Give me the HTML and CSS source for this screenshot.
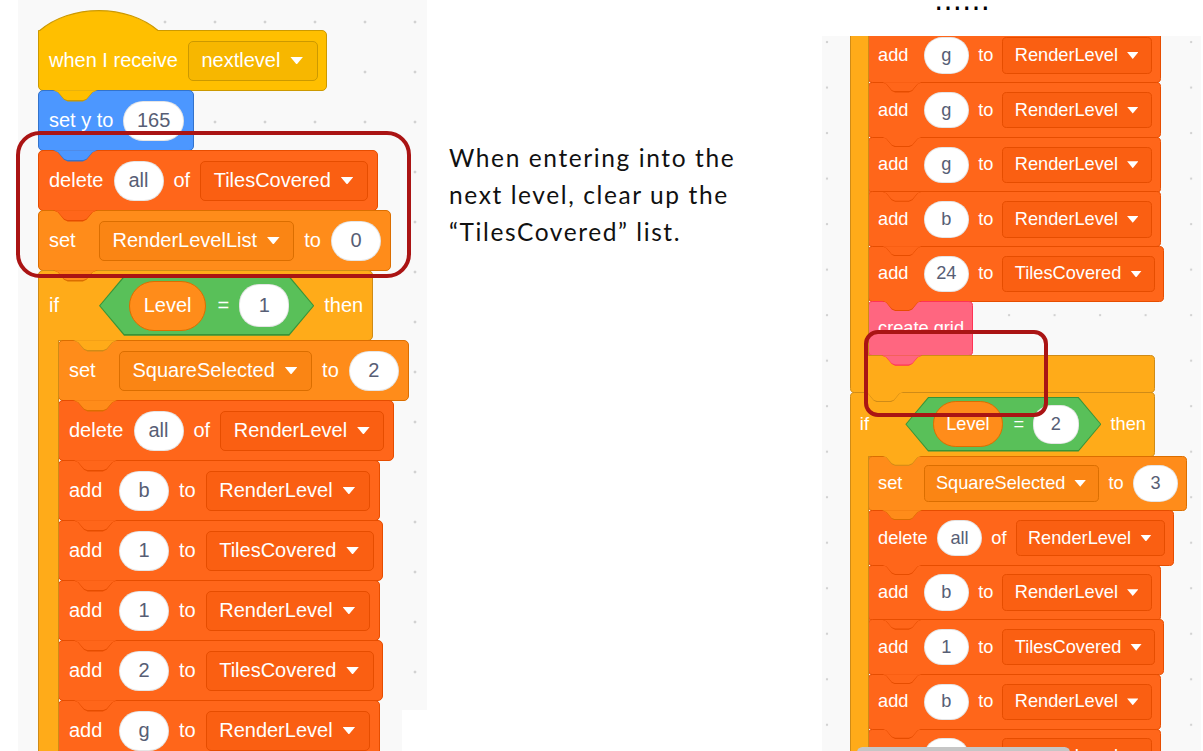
FILE: index.html
```html
<!DOCTYPE html>
<html lang="en">
<head>
    <meta charset="UTF-8">
    <title>Next level</title>
    <link rel="stylesheet" href="styles.css">
</head>
<body>
    <div class="slide">
        <!-- left screenshot: start of the nextlevel script -->
        <div class="shot shot-left">
            <div class="stack">
                <div class="block hat events">
                    <svg class="hat-cap" width="100" height="21" viewBox="0 0 100 21"><path d="M1.5 21 C26.5 -1 72.5 -1 97.5 21" fill="#FFBF00" stroke="#CC9900"/></svg>
                    <span class="label">when I receive</span>
                    <span class="dropdown">nextlevel<i class="arrow"></i></span>
                </div>
                <div class="block motion">
                    <span class="label">set y to</span>
                    <span class="oval">165</span>
                </div>
                <div class="block list">
                    <span class="label">delete</span>
                    <span class="oval">all</span>
                    <span class="label">of</span>
                    <span class="dropdown">TilesCovered<i class="arrow"></i></span>
                </div>
                <div class="block data">
                    <span class="label">set</span>
                    <span class="dropdown">RenderLevelList<i class="arrow"></i></span>
                    <span class="label">to</span>
                    <span class="oval">0</span>
                </div>
                <div class="c-block control">
                    <div class="block c-top">
                        <span class="label">if</span>
                        <span class="hex"><span class="pill">Level</span><span class="label">=</span><span class="oval">1</span></span>
                        <span class="label">then</span>
                    </div>
                    <div class="c-body">
                        <div class="c-arm"></div>
                        <div class="stack">
                            <div class="block data">
                                <span class="label">set</span>
                                <span class="dropdown">SquareSelected<i class="arrow"></i></span>
                                <span class="label">to</span>
                                <span class="oval">2</span>
                            </div>
                            <div class="block list">
                                <span class="label">delete</span>
                                <span class="oval">all</span>
                                <span class="label">of</span>
                                <span class="dropdown">RenderLevel<i class="arrow"></i></span>
                            </div>
                            <div class="block list">
                                <span class="label">add</span><span class="oval">b</span><span class="label">to</span>
                                <span class="dropdown">RenderLevel<i class="arrow"></i></span>
                            </div>
                            <div class="block list">
                                <span class="label">add</span><span class="oval">1</span><span class="label">to</span>
                                <span class="dropdown">TilesCovered<i class="arrow"></i></span>
                            </div>
                            <div class="block list">
                                <span class="label">add</span><span class="oval">1</span><span class="label">to</span>
                                <span class="dropdown">RenderLevel<i class="arrow"></i></span>
                            </div>
                            <div class="block list">
                                <span class="label">add</span><span class="oval">2</span><span class="label">to</span>
                                <span class="dropdown">TilesCovered<i class="arrow"></i></span>
                            </div>
                            <div class="block list">
                                <span class="label">add</span><span class="oval">g</span><span class="label">to</span>
                                <span class="dropdown">RenderLevel<i class="arrow"></i></span>
                            </div>
                        </div>
                    </div>
                </div>
            </div>
        </div>

        <div class="note">
            <p>When entering into the<br>next level, clear up the<br>“TilesCovered” list.</p>
        </div>

        <!-- right screenshot: end of level 1, start of level 2 -->
        <div class="right-col">
            <div class="dots">……</div>
            <div class="shot shot-right">
                <div class="stack">
                    <div class="c-block control">
                        <div class="c-body">
                            <div class="c-arm"></div>
                            <div class="stack">
                                <div class="block list">
                                    <span class="label">add</span><span class="oval">g</span><span class="label">to</span>
                                    <span class="dropdown">RenderLevel<i class="arrow"></i></span>
                                </div>
                                <div class="block list">
                                    <span class="label">add</span><span class="oval">g</span><span class="label">to</span>
                                    <span class="dropdown">RenderLevel<i class="arrow"></i></span>
                                </div>
                                <div class="block list">
                                    <span class="label">add</span><span class="oval">g</span><span class="label">to</span>
                                    <span class="dropdown">RenderLevel<i class="arrow"></i></span>
                                </div>
                                <div class="block list">
                                    <span class="label">add</span><span class="oval">b</span><span class="label">to</span>
                                    <span class="dropdown">RenderLevel<i class="arrow"></i></span>
                                </div>
                                <div class="block list">
                                    <span class="label">add</span><span class="oval">24</span><span class="label">to</span>
                                    <span class="dropdown">TilesCovered<i class="arrow"></i></span>
                                </div>
                                <div class="block custom">
                                    <span class="label clipped">create grid</span>
                                </div>
                            </div>
                        </div>
                        <div class="block c-bottom"></div>
                    </div>
                    <div class="c-block control">
                        <div class="block c-top">
                            <span class="label">if</span>
                            <span class="hex"><span class="pill">Level</span><span class="label">=</span><span class="oval">2</span></span>
                            <span class="label">then</span>
                        </div>
                        <div class="c-body">
                            <div class="c-arm"></div>
                            <div class="stack">
                                <div class="block data">
                                    <span class="label">set</span>
                                    <span class="dropdown">SquareSelected<i class="arrow"></i></span>
                                    <span class="label">to</span>
                                    <span class="oval">3</span>
                                </div>
                                <div class="block list">
                                    <span class="label">delete</span>
                                    <span class="oval">all</span>
                                    <span class="label">of</span>
                                    <span class="dropdown">RenderLevel<i class="arrow"></i></span>
                                </div>
                                <div class="block list">
                                    <span class="label">add</span><span class="oval">b</span><span class="label">to</span>
                                    <span class="dropdown">RenderLevel<i class="arrow"></i></span>
                                </div>
                                <div class="block list">
                                    <span class="label">add</span><span class="oval">1</span><span class="label">to</span>
                                    <span class="dropdown">TilesCovered<i class="arrow"></i></span>
                                </div>
                                <div class="block list">
                                    <span class="label">add</span><span class="oval">b</span><span class="label">to</span>
                                    <span class="dropdown">RenderLevel<i class="arrow"></i></span>
                                </div>
                                <div class="block list">
                                    <span class="label">add</span><span class="oval">g</span><span class="label">to</span>
                                    <span class="dropdown">RenderLevel<i class="arrow"></i></span>
                                </div>
                            </div>
                        </div>
                    </div>
                </div>
                <div class="scrollbar"></div>
            </div>
        </div>

        <div class="callout callout-left"></div>
        <div class="callout callout-right"></div>
    </div>
</body>
</html>
```

FILE: styles.css
```css
* {
    box-sizing: border-box;
}
body {
    margin: 0;
    background: #ffffff;
    font-family: "Liberation Sans", Arial, sans-serif;
}
.slide {
    position: relative;
    display: flex;
    width: 1203px;
    height: 751px;
    overflow: hidden;
}

/* workspace screenshots: drawn in scratch units, then zoomed */
.shot {
    position: relative;
    flex: none;
    overflow: hidden;
    background-color: #f9f9f9;
    background-image: radial-gradient(circle, #d2d2d2 0.9px, transparent 1.4px);
    background-size: 40px 40px;
    font-size: 16px;
    color: #ffffff;
}
.shot-left {
    zoom: 1.25;
    margin-left: 14.4px;
    width: 327.2px;
    height: 600.8px;
    padding: 24px 0 0 16px;
    background-position: 17.6px -2.4px;
}
/* white corner left by the crop */
.shot-left::after {
    content: "";
    position: absolute;
    right: 0;
    bottom: 0;
    width: 20px;
    height: 32.8px;
    background: #ffffff;
    z-index: 2;
}
.shot-right {
    zoom: 1.138;
    width: 333px;
    height: 628.3px;
    padding-left: 24.4px;
    background-position: -15.6px -14.7px;
}
.shot-right > .stack {
    margin-top: -7.4px;
}
.scrollbar {
    position: absolute;
    left: 30.8px;
    top: 624.8px;
    width: 187.2px;
    height: 10px;
    border-radius: 5px;
    background: #c6c6c6;
    z-index: 2;
}

/* block colours */
.events  { --fill: #FFBF00; --stroke: #CC9900; --field: #F7B700; }
.motion  { --fill: #4C97FF; --stroke: #3373CC; --field: #4280D7; }
.data    { --fill: #FF8C1A; --stroke: #DB6E00; --field: #FA8514; }
.list    { --fill: #FF661A; --stroke: #E64D00; --field: #FA5F12; }
.control { --fill: #FFAB19; --stroke: #CF8B17; --field: #EC9C13; }
.custom  { --fill: #FF6680; --stroke: #FF3355; --field: #FF4D6A; }

.stack {
    display: flex;
    flex-direction: column;
    align-items: flex-start;
}
.stack > * + * {
    margin-top: -1px;
}

.block {
    position: relative;
    display: flex;
    align-items: center;
    gap: 8px;
    height: 49px;
    padding: 0 7px 0 8px;
    background: var(--fill);
    border: 1px solid var(--stroke);
    border-radius: 4px;
    white-space: nowrap;
}
/* the tab under each block that sits in the next one's notch */
.block::before,
.block::after {
    content: "";
    position: absolute;
    top: 100%;
    z-index: 1;
}
.block::before {
    left: 11px;
    width: 36px;
    height: 9px;
    background: var(--stroke);
    clip-path: polygon(0 0, 4px 1.5px, 9px 7.5px, 12px 9px, 24px 9px, 27px 7.5px, 32px 1.5px, 36px 0);
}
.block::after {
    left: 12px;
    width: 34px;
    height: 8px;
    background: var(--fill);
    clip-path: polygon(0 0, 3.5px 1.5px, 8px 6.8px, 11px 8px, 23px 8px, 26px 6.8px, 30.5px 1.5px, 34px 0);
}
.block > .label:first-of-type {
    min-width: 32px;
}

.hat {
    border-radius: 0 4px 4px 4px;
}
.hat-cap {
    position: absolute;
    left: -2px;
    top: -21px;
}

.oval {
    display: flex;
    align-items: center;
    justify-content: center;
    height: 32px;
    min-width: 40px;
    padding: 0 10px;
    border-radius: 16px;
    background: #ffffff;
    border: 1px solid rgba(0, 0, 0, 0.1);
    color: #575E75;
}
.dropdown {
    display: flex;
    align-items: center;
    height: 32px;
    padding: 0 11px 0 10px;
    background: var(--field);
    border: 1px solid var(--stroke);
    border-radius: 4px;
}
.arrow {
    width: 10px;
    height: 6px;
    margin-left: 8px;
    background: #ffffff;
    clip-path: polygon(0 0, 100% 0, 50% 100%);
}

/* green boolean */
.hex {
    position: relative;
    z-index: 0;
    display: flex;
    align-items: center;
    gap: 8px;
    height: 48px;
    padding: 0 20px 0 24px;
}
.hex::before,
.hex::after {
    content: "";
    position: absolute;
    z-index: -1;
}
.hex::before {
    inset: 0;
    background: #389438;
    clip-path: polygon(20px 0, calc(100% - 20px) 0, 100% 50%, calc(100% - 20px) 100%, 20px 100%, 0 50%);
}
.hex::after {
    inset: 1px;
    background: #59C059;
    clip-path: polygon(19.5px 0, calc(100% - 19.5px) 0, 100% 50%, calc(100% - 19.5px) 100%, 19.5px 100%, 0 50%);
}
.hex .label {
    margin-left: 1px;
}
.hex .oval {
    height: 34px;
}
.pill {
    display: flex;
    align-items: center;
    height: 40px;
    padding: 0 11px;
    border-radius: 20px;
    background: #FF8C1A;
    border: 1px solid #DB6E00;
}

/* if blocks */
.c-block {
    display: flex;
    flex-direction: column;
    align-items: flex-start;
}
.c-block > * + * {
    margin-top: -1px;
}
.c-top {
    height: 57px;
    border-radius: 4px 4px 4px 0;
}
.c-top::before { left: 27px; }
.c-top::after { left: 28px; }
.c-body {
    display: flex;
}
.c-arm {
    position: relative;
    z-index: 1;
    flex: none;
    width: 17px;
    background: var(--fill);
    border-left: 1px solid var(--stroke);
    border-right: 1px solid var(--stroke);
}
.c-body > .stack {
    margin-left: -1px;
}
.c-bottom {
    width: 268px;
    height: 33px;
    border-radius: 0 4px 4px 4px;
}

/* label cut off at the bottom */
.clipped {
    align-self: flex-start;
    margin-top: 14.5px;
    height: 12.8px;
    overflow: hidden;
}

/* slide text */
.note {
    flex: none;
    width: 395px;
    padding: 139px 0 0 22px;
    font-family: Lato, "Open Sans", sans-serif;
    font-size: 24.5px;
    line-height: 37px;
    letter-spacing: 1.6px;
    color: #111111;
}
.note p {
    margin: 0;
}
.right-col {
    flex: none;
    width: 379px;
}
.dots {
    margin-top: -13px;
    height: 49px;
    padding-left: 112px;
    font-family: "DejaVu Sans", sans-serif;
    font-size: 28px;
    line-height: 28px;
    color: #000000;
}

/* red annotation frames */
.callout {
    position: absolute;
    z-index: 5;
    border: 4px solid #AA1414;
}
.callout-left {
    left: 16px;
    top: 131px;
    width: 395px;
    height: 147px;
    border-radius: 24px;
}
.callout-right {
    left: 864px;
    top: 330px;
    width: 184px;
    height: 87px;
    border-radius: 14px;
}
```
